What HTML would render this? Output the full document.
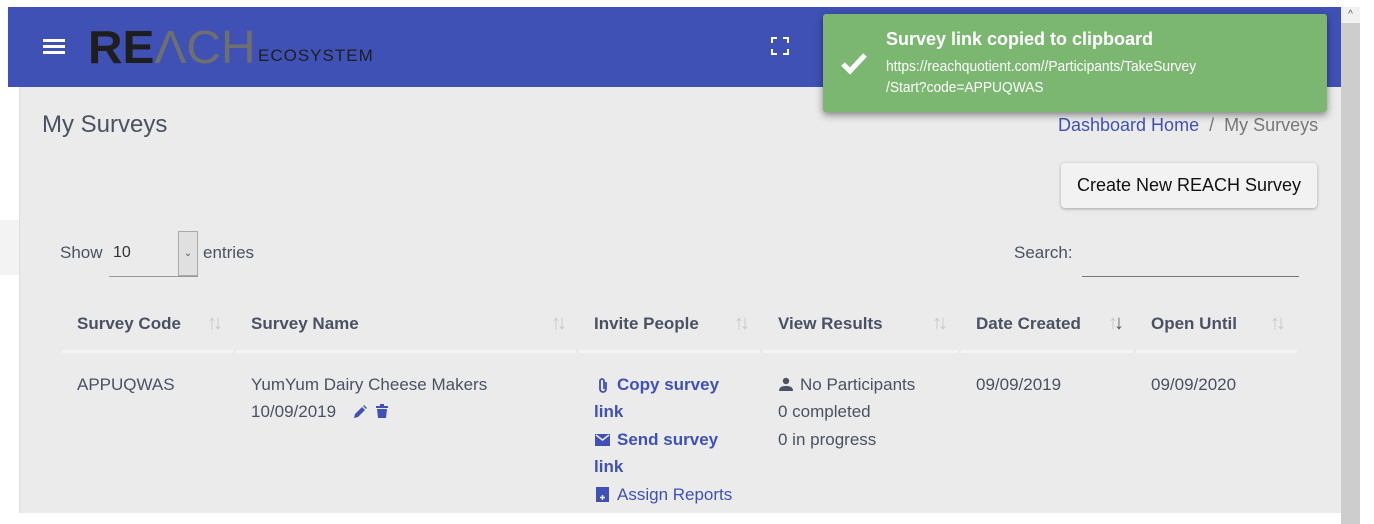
<!DOCTYPE html>
<html><head><meta charset="utf-8"><style>
*{margin:0;padding:0;box-sizing:border-box}
body{width:1374px;height:524px;background:#fff;position:relative;overflow:hidden;font-family:"Liberation Sans",sans-serif;color:#4a5163}
.a{position:absolute;white-space:nowrap}
.hdr{left:8px;top:7px;width:1333px;height:80px;background:#3f51b5}
.content{left:19px;top:87px;width:1322px;height:426px;background:#ebebeb;border-left:1px solid #ddd}
.sb{left:1341px;top:7px;width:19px;height:517px;background:#cdcdcd}
.th{font-weight:bold;font-size:17px;top:314px;color:#4a5163}
.arr{top:312px;font-size:20px;color:#c8c8c8;letter-spacing:-4px}
.line{top:350px;height:3px;background:#f4f4f4}
.td{font-size:17px;color:#4a5163}
.lk{color:#3f51b5;font-size:17px}
</style></head><body>
<div class="a hdr"></div>
<div class="a" style="left:0;top:220px;width:19px;height:55px;background:#f3f3f3"></div>
<div class="a content"></div>
<div class="a sb"></div>
<div class="a" style="left:1341px;top:7px;width:19px;height:16px;background:#f1f1f1;font-size:10px;text-align:center;color:#555;line-height:16px">^</div>
<div class="a" style="left:43px;top:39px;width:22px;height:3px;background:#fff"></div>
<div class="a" style="left:43px;top:45px;width:22px;height:3px;background:#fff"></div>
<div class="a" style="left:43px;top:51px;width:22px;height:3px;background:#fff"></div>
<div class="a" style="left:88px;top:24px;font-size:46px;line-height:46px;transform:scaleX(1.04);transform-origin:left"><span style="color:#1e1e1e;font-weight:bold">RE</span><span style="color:#6f6f6f">ΛCH</span></div>
<div class="a" style="left:258px;top:46px;font-size:17px;color:#1e1e1e;letter-spacing:1px">ECOSYSTEM</div>
<svg class="a" style="left:771px;top:37px" width="18" height="18" viewBox="0 0 18 18" fill="none" stroke="#fff" stroke-width="2"><path d="M1 6V1h5M12 1h5v5M17 12v5h-5M6 17H1v-5"/></svg>
<div class="a" style="left:42px;top:111px;font-size:24px;color:#4a5163">My Surveys</div>
<div class="a" style="left:1058px;top:115px;font-size:18px"><span style="color:#3f51b5">Dashboard Home</span><span style="color:#777"> &nbsp;/ &nbsp;My Surveys</span></div>
<div class="a" style="left:1061px;top:163px;width:256px;height:45px;background:#f2f2f2;border-radius:4px;box-shadow:0 1px 3px rgba(0,0,0,.3);font-size:18px;color:#111;text-align:center;line-height:45px">Create New REACH Survey</div>
<div class="a" style="left:60px;top:243px;font-size:17px">Show</div>
<div class="a" style="left:109px;top:276px;width:89px;height:1px;background:#999"></div>
<div class="a" style="left:113px;top:244px;font-size:16px;color:#333">10</div>
<div class="a" style="left:178px;top:231px;width:20px;height:45px;background:#e0e0e0;border:1px solid #aaa;font-size:10px;text-align:center;line-height:43px;color:#555">⌄</div>
<div class="a" style="left:203px;top:243px;font-size:17px">entries</div>
<div class="a" style="left:1014px;top:243px;font-size:17px">Search:</div>
<div class="a" style="left:1082px;top:276px;width:217px;height:1px;background:#777"></div>
<div class="a th" style="left:77px">Survey Code</div><div class="a arr" style="left:207px">↑↓</div>
<div class="a th" style="left:251px">Survey Name</div><div class="a arr" style="left:551px">↑↓</div>
<div class="a th" style="left:594px">Invite People</div><div class="a arr" style="left:734px">↑↓</div>
<div class="a th" style="left:778px">View Results</div><div class="a arr" style="left:932px">↑↓</div>
<div class="a th" style="left:976px">Date Created</div><div class="a arr" style="left:1108px"><span>↑</span><span style="color:#555">↓</span></div>
<div class="a th" style="left:1151px">Open Until</div><div class="a arr" style="left:1270px">↑↓</div>
<div class="a line" style="left:62px;width:171px"></div>
<div class="a line" style="left:236px;width:340px"></div>
<div class="a line" style="left:579px;width:181px"></div>
<div class="a line" style="left:763px;width:195px"></div>
<div class="a line" style="left:961px;width:172px"></div>
<div class="a line" style="left:1136px;width:161px"></div>
<div class="a td" style="left:77px;top:375px">APPUQWAS</div>
<div class="a td" style="left:251px;top:375px">YumYum Dairy Cheese Makers</div>
<div class="a td" style="left:251px;top:402px">10/09/2019</div>
<svg class="a" style="left:353px;top:405px" width="14" height="14" viewBox="0 0 14 14"><path d="M1 13l1-4 7-7 3 3-7 7zM10 1l3 3 1-1-3-3z" fill="#3f51b5"/></svg>
<svg class="a" style="left:376px;top:404px" width="12" height="14" viewBox="0 0 12 14"><path d="M0 2h12v2H0zM4 0h4v2H4zM1 5h10l-1 9H2z" fill="#3f51b5"/></svg>
<svg class="a" style="left:597px;top:377px" width="12" height="17" viewBox="0 0 12 17"><path d="M9 5v7a3 3 0 0 1-6 0V4a2 2 0 0 1 4 0v8" stroke="#3f51b5" stroke-width="1.8" fill="none"/></svg>
<div class="a lk" style="left:617px;top:375px;font-weight:bold">Copy survey</div>
<div class="a lk" style="left:594px;top:402px;font-weight:bold">link</div>
<svg class="a" style="left:595px;top:434px" width="15" height="12" viewBox="0 0 15 12"><rect width="15" height="12" fill="#3f51b5"/><path d="M1 1l6.5 5L14 1" stroke="#ebebeb" stroke-width="1.5" fill="none"/></svg>
<div class="a lk" style="left:617px;top:430px;font-weight:bold">Send survey</div>
<div class="a lk" style="left:594px;top:457px;font-weight:bold">link</div>
<svg class="a" style="left:596px;top:487px" width="13" height="15" viewBox="0 0 13 15"><path d="M0 0h13v15H0z" fill="#3f51b5"/><path d="M6.5 8v5M4 10.5h5" stroke="#ebebeb" stroke-width="1.5"/></svg>
<div class="a lk" style="left:617px;top:485px">Assign Reports</div>
<svg class="a" style="left:779px;top:377px" width="14" height="14" viewBox="0 0 14 14"><circle cx="7" cy="4" r="3.2" fill="#4a5163"/><path d="M0 14c0-4 3-5 7-5s7 1 7 5z" fill="#4a5163"/></svg>
<div class="a td" style="left:800px;top:375px">No Participants</div>
<div class="a td" style="left:778px;top:402px">0 completed</div>
<div class="a td" style="left:778px;top:430px">0 in progress</div>
<div class="a td" style="left:976px;top:375px">09/09/2019</div>
<div class="a td" style="left:1151px;top:375px">09/09/2020</div>
<div class="a" style="left:823px;top:14px;width:504px;height:98px;background:#7cb772;border-radius:3px;box-shadow:0 3px 8px rgba(0,0,0,.45)"></div>
<svg class="a" style="left:840px;top:52px" width="28" height="24" viewBox="0 0 28 24"><path d="M3 12l7 7L25 3" stroke="#fff" stroke-width="5" fill="none"/></svg>
<div class="a" style="left:886px;top:29px;font-size:18px;font-weight:bold;color:#fff">Survey link copied to clipboard</div>
<div class="a" style="left:886px;top:59px;font-size:14.5px;color:#fff;transform:scaleX(0.95);transform-origin:left">https://reachquotient.com//Participants/TakeSurvey</div>
<div class="a" style="left:886px;top:80px;font-size:14.5px;color:#fff;transform:scaleX(0.95);transform-origin:left">/Start?code=APPUQWAS</div>
</body></html>
